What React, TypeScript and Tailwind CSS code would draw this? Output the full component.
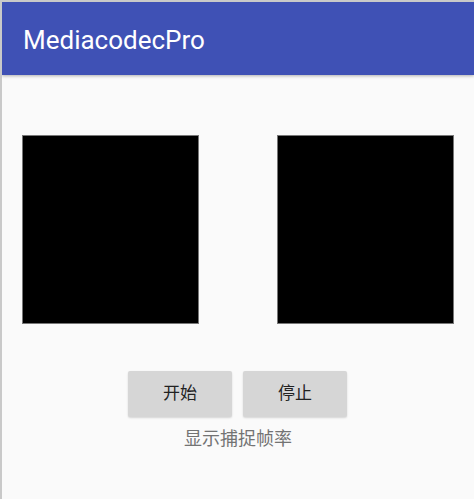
export default function App() {
  return (
    <div
      className="h-[499px] w-[474px] overflow-hidden border-l-2 border-t-2 border-[#c9c9c9] bg-[#fafafa]"
      style={{ fontFamily: 'Roboto, "Noto Sans CJK SC", sans-serif' }}
    >
      {/* toolbar */}
      <header className="flex h-[73px] items-center bg-[#3f51b5] pl-[21px] shadow-[0_1px_3px_rgba(0,0,0,0.3)]">
        <h1 className="pt-[2px] text-[26px] font-normal leading-none text-white">MediacodecPro</h1>
      </header>

      {/* preview surfaces */}
      <div className="mt-[60px] flex justify-between pl-[20px] pr-[20px]">
        <div className="h-[189px] w-[177px] border border-[#777] bg-black" />
        <div className="h-[189px] w-[177px] border border-[#777] bg-black" />
      </div>

      <div className="mt-[47px] flex justify-center gap-[11px] pr-[1px]">
        <button className="h-[46px] w-[104px] rounded-[2px] bg-[#d6d6d6] text-[17px] text-[#222] shadow-[0_1px_2px_rgba(0,0,0,0.15)]">
          开始
        </button>
        <button className="h-[46px] w-[104px] rounded-[2px] bg-[#d6d6d6] text-[17px] text-[#222] shadow-[0_1px_2px_rgba(0,0,0,0.15)]">
          停止
        </button>
      </div>
      <p className="mt-[11px] text-center text-[18px] leading-[22px] text-[#737373]">显示捕捉帧率</p>
    </div>
  );
}
